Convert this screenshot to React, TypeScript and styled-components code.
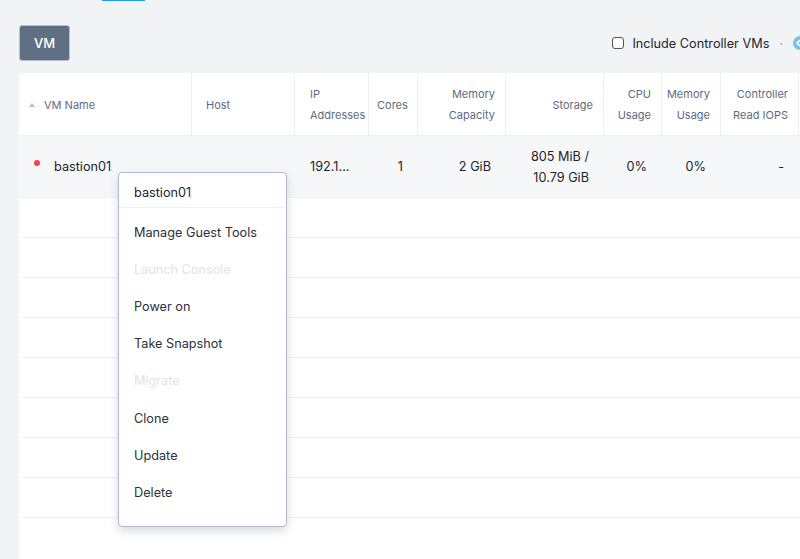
import React from 'react'
import styled, { createGlobalStyle } from 'styled-components'

const GlobalStyle = createGlobalStyle`
    html, body {
        margin: 0;
        padding: 0;
        width: 800px;
        height: 559px;
        overflow: hidden;
        background: #f2f3f5;
        font-family: "Inter", "Noto Sans", sans-serif;
    }
`

const Page = styled.div`
    width: 800px;
    height: 559px;
    overflow: hidden;
    position: relative;
    background: #f2f3f5;
`

const TabMarker = styled.div`
    width: 43px;
    height: 1px;
    margin-left: 102px;
    background: #1b9cf0;
`

const Toolbar = styled.div`
    display: flex;
    align-items: center;
    justify-content: space-between;
    height: 36px;
    margin: 24px 0 12px 19px;
`

const ViewButton = styled.div`
    width: 49px;
    height: 34px;
    display: flex;
    align-items: center;
    justify-content: center;
    border: 1px solid #b5c0cf;
    border-radius: 3px;
    background: #5f6f84;
    color: #fff;
    font-size: 13px;
    font-weight: 500;
`

const ToolbarRight = styled.div`
    display: flex;
    align-items: center;
    margin-right: -7px;
    font-size: 12.7px;
    color: #22262e;
`

const Check = styled.span`
    width: 10px;
    height: 10px;
    margin-right: 8px;
    border: 1px solid #4a5568;
    border-radius: 3px;
    background: #fff;
`

const Dot = styled.span`
    margin: 0 10px;
    color: #7d93ad;
`

const InfoIcon = styled.svg`
    width: 14px;
    height: 14px;
    display: block;
`

const Table = styled.div`
    margin-left: 19px;
    background: #fff;
    border-radius: 4px 0 0 0;
    height: 486px;
    overflow: hidden;
`

const columns = '173px 103px 74px 49px 88px 98px 58px 59px 78px 20px'

const HeaderRow = styled.div`
    display: grid;
    grid-template-columns: ${columns};
    height: 62px;
    border-bottom: 1px solid #eff0f3;
`

const HeaderCell = styled.div<{ $right?: boolean; $tight?: boolean }>`
    display: flex;
    align-items: center;
    justify-content: ${({ $right }) => ($right ? 'flex-end' : 'flex-start')};
    padding: 2px ${({ $right }) => ($right ? '10px' : '4px')} 0
        ${({ $right, $tight }) => ($right ? '2px' : $tight ? '8px' : '14px')};
    box-sizing: border-box;
    border-right: 1px solid #eff0f3;
    font-size: 11px;
    line-height: 21px;
    color: #5d6b80;
    text-align: ${({ $right }) => ($right ? 'right' : 'left')};
`

const NameHeader = styled(HeaderCell)`
    padding-left: 10px;
`

const AddressHeader = styled(HeaderCell)`
    padding-left: 15px;
`

const SortCaret = styled.span`
    width: 0;
    height: 0;
    margin: 0 9px 0 0;
    border-left: 3px solid transparent;
    border-right: 3px solid transparent;
    border-bottom: 4px solid #b3bdca;
`

const DataRow = styled.div`
    display: grid;
    grid-template-columns: ${columns};
    height: 61px;
    background: #f6f7f9;
    border-bottom: 1px solid #eff0f3;
`

const DataCell = styled.div<{ $right?: boolean }>`
    display: flex;
    align-items: center;
    justify-content: ${({ $right }) => ($right ? 'flex-end' : 'flex-start')};
    padding: 0 15px;
    font-size: 12.7px;
    line-height: 21px;
    color: #1f2329;
    text-align: right;
    white-space: nowrap;
`

const NameCell = styled(DataCell)`
    padding-left: 35px;
    position: relative;
`

const StatusDot = styled.span`
    position: absolute;
    left: 15px;
    top: 24px;
    width: 6px;
    height: 6px;
    border-radius: 50%;
    background: #ef4350;
`

const EmptyRow = styled.div`
    height: 39px;
    border-bottom: 1px solid #eff0f3;
`

const Menu = styled.div`
    position: absolute;
    left: 118px;
    top: 172px;
    width: 167px;
    height: 353px;
    background: #fff;
    border: 1px solid #b0b9cd;
    border-radius: 4px;
    box-shadow: 0 4px 10px rgba(60, 70, 90, 0.2);
`

const MenuTitle = styled.div`
    height: 30px;
    display: flex;
    align-items: center;
    padding: 4px 0 0 15px;
    border-bottom: 1px solid #f0f1f4;
    font-size: 12.7px;
    color: #22262e;
`

const MenuList = styled.div`
    display: flex;
    flex-direction: column;
    padding-top: 6px;
`

const MenuItem = styled.div<{ $disabled?: boolean }>`
    height: 37.1px;
    display: flex;
    align-items: center;
    padding-left: 15px;
    font-size: 12.7px;
    color: ${({ $disabled }) => ($disabled ? '#dfe3ea' : '#2c313a')};
`

const menuItems = [
    { label: 'Manage Guest Tools' },
    { label: 'Launch Console', disabled: true },
    { label: 'Power on' },
    { label: 'Take Snapshot' },
    { label: 'Migrate', disabled: true },
    { label: 'Clone' },
    { label: 'Update' },
    { label: 'Delete' },
]

const App = (): JSX.Element => {
    return (
        <Page>
            <GlobalStyle />
            <TabMarker />
            <Toolbar>
                <ViewButton>VM</ViewButton>
                <ToolbarRight>
                    <Check />
                    Include Controller VMs
                    <Dot>·</Dot>
                    <InfoIcon viewBox="0 0 14 14">
                        <circle cx="7" cy="7" r="7" fill="#7cc0ee" />
                        <path
                            d="M7 4 L4 7 L7 10"
                            fill="none"
                            stroke="#fff"
                            strokeWidth="1.6"
                        />
                    </InfoIcon>
                </ToolbarRight>
            </Toolbar>
            <Table>
                <HeaderRow>
                    <NameHeader>
                        <SortCaret />
                        VM Name
                    </NameHeader>
                    <HeaderCell>Host</HeaderCell>
                    <AddressHeader>
                        <div>
                            IP
                            <br />
                            Addresses
                        </div>
                    </AddressHeader>
                    <HeaderCell $tight>Cores</HeaderCell>
                    <HeaderCell $right>
                        <div>
                            Memory
                            <br />
                            Capacity
                        </div>
                    </HeaderCell>
                    <HeaderCell $right>Storage</HeaderCell>
                    <HeaderCell $right>
                        <div>
                            CPU
                            <br />
                            Usage
                        </div>
                    </HeaderCell>
                    <HeaderCell $right>
                        <div>
                            Memory
                            <br />
                            Usage
                        </div>
                    </HeaderCell>
                    <HeaderCell $right>
                        <div>
                            Controller
                            <br />
                            Read IOPS
                        </div>
                    </HeaderCell>
                    <HeaderCell />
                </HeaderRow>
                <DataRow>
                    <NameCell>
                        <StatusDot />
                        bastion01
                    </NameCell>
                    <DataCell />
                    <DataCell>192.1...</DataCell>
                    <DataCell $right>1</DataCell>
                    <DataCell $right>2 GiB</DataCell>
                    <DataCell $right>
                        <div>
                            805 MiB /
                            <br />
                            10.79 GiB
                        </div>
                    </DataCell>
                    <DataCell $right>0%</DataCell>
                    <DataCell $right>0%</DataCell>
                    <DataCell $right>-</DataCell>
                    <DataCell />
                </DataRow>
                {Array.from({ length: 8 }).map((_, i) => (
                    <EmptyRow key={i} />
                ))}
            </Table>
            <Menu>
                <MenuTitle>bastion01</MenuTitle>
                <MenuList>
                    {menuItems.map((item) => (
                        <MenuItem key={item.label} $disabled={item.disabled}>
                            {item.label}
                        </MenuItem>
                    ))}
                </MenuList>
            </Menu>
        </Page>
    )
}

export default App
